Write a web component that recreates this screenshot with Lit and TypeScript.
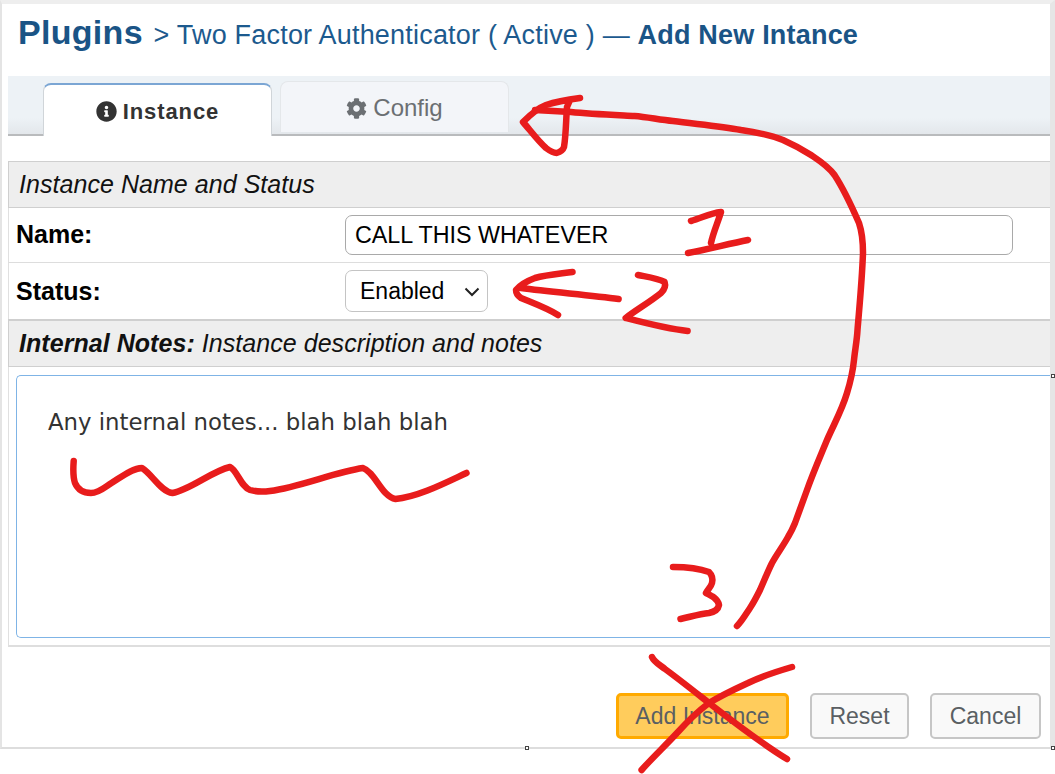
import { LitElement, html, css, svg } from "lit";
import { customElement } from "lit/decorators.js";

const strokes = [
  "M737 626C742 621 746 614 750 608C754 602 757 596 760 590C764 581 768 571 772 563C777 554 783 546 788 537C791 532 793 528 795 523C799 512 803 501 807 490C813 473 820 457 827 440C834 424 842 410 847 393C851 380 853 370 854 360C855 350 857 340 857.5 330C860 300 862 280 863 253C863 240 862 232 859 223C852 207 843 188 834.5 175C828 166 820 161 811 155C800 148 792 144 783 140C768 134 755 132 741 130C720 126 695 124 673 121C660 120 648 117 634.5 116C615 115 590 114 571 112L535 110",
  "M580 98C565 100 555 102 546 105C538 108 530 115 523 122C530 130 538 141 546 148C550 151 553 153 556.6 153C560 152 563 150 564 147C566 135 566 120 567 107L570 100",
  "M691 221C702 218 710 213 721 212C718 222 713 233 711 243M688 253C705 250 728 244 748 240",
  "M572.5 272C558 274 546 275 535 278C527 281 520 285 516 290C516 294 518 296 521 298C533 303 547 308 558 315M521 288C550 292 590 295 618.6 299",
  "M638 275C648 277 657 278 664.6 282C666 286 664 290 661 293C650 302 636 310 625.7 318C645 323 668 329 687.6 331",
  "M73.7 461C73 470 73 477 75 483C78 490 84 493 91 493C99 493 105 487 111.5 483C120 478 132 468 142 468C152 474 161 492 172.4 493C190 490 212 471 230 467C237 470 241 487 250 490C257 492 263 492 270 491C300 487 335 472 363 468C375 472 382 497 395.5 499C418 497 445 483 466.5 473",
  "M673 567C685 567 698 568 709 572C712 575 713 579 712 583C711 587 708 589 706 593C712 596 718 599 719 605C718 610 714 612 709 613C699 614 690 617 680.5 619",
  "M652 657C654 662 660 665 665 669C680 680 695 692 709 703C735 723 762 744 787 759",
  "M792 667C775 672 762 676 748 683C735 689 722 695 709 703C697 712 686 723 677 733C665 746 652 758 641.6 770",
];

@customElement("app-root")
export class AppRoot extends LitElement {
  static styles = css`
    :host {
      display: block;
      position: relative;
      width: 1055px;
      height: 774px;
      overflow: hidden;
      background: #fff;
      font-family: "Liberation Sans", Arial, sans-serif;
    }
    .frame {
      box-sizing: border-box;
      width: 1055px;
      height: 749px;
      background: #fff;
      border-top: 4px solid #eeeeee;
      border-left: 2px solid #e4e4e4;
      border-right: 5px solid #e6e6e6;
      border-bottom: 2px solid #dddddd;
      padding-left: 6px;
      display: flex;
      flex-direction: column;
    }
    .title {
      height: 72px;
      box-sizing: border-box;
      margin-left: 10px;
      padding-top: 7px;
      color: #1c5a8e;
      font-size: 27px;
      line-height: 42px;
      letter-spacing: 0.2px;
      white-space: nowrap;
    }
    .title .big {
      font-size: 34px;
      font-weight: 700;
      color: #1a5486;
      margin-right: 3px;
      letter-spacing: 0.3px;
    }
    .title b { color: #1a5486; }
    .band {
      height: 60px;
      box-sizing: border-box;
      background: linear-gradient(#edf2f6 0, #edf2f6 72%, #e3e7eb 100%);
      border-bottom: 2px solid #b9bbbd;
      padding-left: 35px;
      display: flex;
      align-items: flex-start;
      gap: 8px;
    }
    .tab {
      box-sizing: border-box;
      width: 229px;
      display: flex;
      align-items: center;
      justify-content: center;
      gap: 6px;
      border-radius: 8px 8px 0 0;
    }
    .tab.on {
      height: 53px;
      margin-top: 7px;
      padding-top: 2px;
      background: #fff;
      border: 1px solid #d0d5d9;
      border-top: 2px solid #7ba6d4;
      border-bottom: none;
      color: #333;
      font-size: 22px;
      font-weight: 700;
      letter-spacing: 0.9px;
      position: relative;
      z-index: 1;
    }
    .tab.off {
      height: 51px;
      margin-top: 5px;
      padding-top: 2px;
      background: #f3f5f9;
      border: 1px solid #e4e7ea;
      border-bottom: none;
      color: #6b6f73;
      font-size: 24px;
    }
    .tab svg { width: 21px; height: 21px; fill: currentColor; }
    .gap { height: 25px; }
    .panel {
      flex: 1;
      display: flex;
      flex-direction: column;
    }
    .sect {
      box-sizing: border-box;
      background: #eeeeee;
      border: 1px solid #cfcfcf;
      border-right: none;
      font-style: italic;
      font-size: 25px;
      letter-spacing: 0.05px;
      color: #111;
      padding-left: 10px;
      display: flex;
      align-items: center;
      white-space: pre;
    }
    .sect.a { height: 47px; }
    .sect.b { height: 48px; border-top-width: 2px; }
    .row {
      box-sizing: border-box;
      display: flex;
      align-items: center;
      padding-left: 7px;
      border-left: 1px solid #e0e0e0;
    }
    .row.name { height: 55px; border-bottom: 1px solid #dddddd; }
    .row.status { height: 56px; }
    .label {
      width: 329px;
      font-weight: 700;
      font-size: 25px;
      color: #000;
    }
    .row.name .label { padding-bottom: 2px; }
    .input {
      box-sizing: border-box;
      width: 668px;
      height: 40px;
      border: 1px solid #a9a9a9;
      border-radius: 7px;
      padding-left: 9px;
      display: flex;
      align-items: center;
      font-size: 23.3px;
      color: #000;
    }
    .select {
      box-sizing: border-box;
      width: 143px;
      height: 42px;
      border: 1px solid #c4c4c4;
      border-radius: 7px;
      padding: 1px 7px 0 14px;
      display: flex;
      align-items: center;
      justify-content: space-between;
      font-size: 23px;
      color: #000;
    }
    .select svg { width: 16px; height: 10px; }
    .notes {
      height: 280px;
      box-sizing: border-box;
      border-left: 1px solid #e0e0e0;
      border-bottom: 2px solid #dedede;
      padding: 8px 0 7px 7px;
      display: flex;
    }
    .box {
      flex: 1;
      border: 1px solid #7fb4e6;
      border-right: none;
      border-radius: 5px 0 0 5px;
      padding: 31px 0 0 31px;
      font-family: "DejaVu Sans", sans-serif;
      font-size: 22.8px;
      line-height: 30px;
      color: #333;
    }
    .actions {
      flex: 1;
      display: flex;
      justify-content: flex-end;
      align-items: flex-start;
      gap: 21px;
      padding: 46px 9px 0 0;
    }
    .btn {
      box-sizing: border-box;
      height: 46px;
      display: flex;
      align-items: center;
      justify-content: center;
      border-radius: 5px;
      font-size: 23px;
      color: #5a5f63;
      background: #f9f9f9;
      border: 2px solid #c6c6c6;
    }
    .btn.add { width: 173px; background: #ffcc5c; border: 3px solid #ffaa00; }
    .btn.reset { width: 99px; }
    .btn.cancel { width: 111px; }
    .ink {
      position: absolute;
      left: 0;
      top: 0;
      width: 1055px;
      height: 774px;
      pointer-events: none;
      z-index: 5;
    }
    .ink path {
      fill: none;
      stroke: #e81c1c;
      stroke-width: 6.5;
      stroke-linecap: round;
      stroke-linejoin: round;
    }
    .ink rect { fill: #fff; stroke: #444; stroke-width: 1; }
  `;

  render() {
    return html`
      <div class="frame">
        <div class="title"><span class="big">Plugins</span> &gt; Two Factor Authenticator ( Active ) — <b>Add New Intance</b></div>
        <div class="band">
          <div class="tab on">
            <svg viewBox="0 0 512 512"><path d="M256 8C119 8 8 119 8 256s111 248 248 248 248-111 248-248S393 8 256 8zm0 110c23 0 42 19 42 42s-19 42-42 42-42-19-42-42 19-42 42-42zm56 254c0 7-5 12-12 12h-88c-7 0-12-5-12-12v-24c0-7 5-12 12-12h12v-64h-12c-7 0-12-5-12-12v-24c0-7 5-12 12-12h64c7 0 12 5 12 12v100h12c7 0 12 5 12 12v24z"/></svg>
            Instance
          </div>
          <div class="tab off">
            <svg viewBox="0 0 512 512"><path d="M487 316l-42-25c4-23 4-47 0-70l42-25c5-3 7-9 6-14-11-35-30-67-55-94-4-4-10-5-15-2l-42 25c-18-15-38-27-61-35V27c0-6-4-11-9-12-36-8-73-8-108 0-6 1-10 6-10 12v49c-22 8-43 20-61 35L90 86c-5-3-11-2-15 2-25 26-44 58-55 94-2 5 1 11 6 14l42 25c-4 23-4 47 0 70l-42 25c-5 3-8 9-6 14 11 35 30 67 55 94 4 4 10 5 15 2l42-25c18 15 39 27 61 35v49c0 6 4 11 10 12 36 8 73 8 108 0 5-1 9-6 9-12v-49c23-8 43-20 61-35l42 25c5 3 11 2 15-2 25-26 44-58 55-94 1-5-1-11-6-14zM256 336c-44 0-80-36-80-80s36-80 80-80 80 36 80 80-36 80-80 80z"/></svg>
            Config
          </div>
        </div>
        <div class="gap"></div>
        <div class="panel">
          <div class="sect a">Instance Name and Status</div>
          <div class="row name">
            <div class="label">Name:</div>
            <div class="input">CALL THIS WHATEVER</div>
          </div>
          <div class="row status">
            <div class="label">Status:</div>
            <div class="select">Enabled
              <svg viewBox="0 0 16 10"><path d="M1.5 1.5L8 8l6.5-6.5" fill="none" stroke="#222" stroke-width="2"/></svg>
            </div>
          </div>
          <div class="sect b"><b>Internal Notes:</b> Instance description and notes</div>
          <div class="notes"><div class="box">Any internal notes... blah blah blah</div></div>
          <div class="actions">
            <div class="btn add">Add Instance</div>
            <div class="btn reset">Reset</div>
            <div class="btn cancel">Cancel</div>
          </div>
        </div>
      </div>
      <svg class="ink" viewBox="0 0 1055 774">
        ${strokes.map((d) => svg`<path d=${d}></path>`)}
        <rect x="1051.5" y="374.5" width="3" height="3"></rect>
        <rect x="525.5" y="746.5" width="3" height="3"></rect>
        <rect x="1051.5" y="746.5" width="3" height="3"></rect>
      </svg>
    `;
  }
}
